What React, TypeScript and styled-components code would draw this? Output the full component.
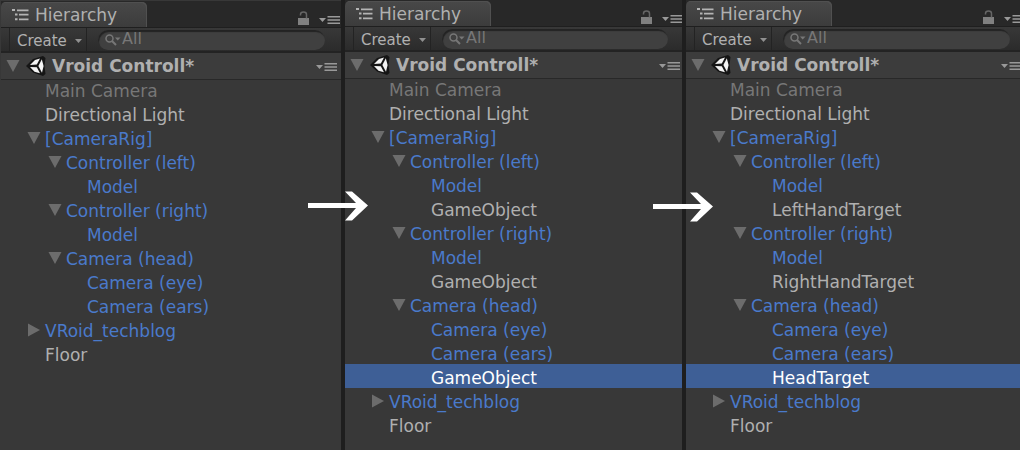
import React from "react";
import styled, { createGlobalStyle } from "styled-components";

type Tone = "normal" | "muted" | "prefab";
type Item = { name: string; depth: number; tone: Tone; fold?: "open" | "closed"; selected?: boolean };

const node = (name: string, depth: number, tone: Tone = "normal", fold?: "open" | "closed"): Item => ({
  name,
  depth,
  tone,
  fold,
});

const buildTree = (left?: string, right?: string, head?: string): Item[] => [
  node("Main Camera", 0, "muted"),
  node("Directional Light", 0),
  node("[CameraRig]", 0, "prefab", "open"),
  node("Controller (left)", 1, "prefab", "open"),
  node("Model", 2, "prefab"),
  ...(left ? [node(left, 2)] : []),
  node("Controller (right)", 1, "prefab", "open"),
  node("Model", 2, "prefab"),
  ...(right ? [node(right, 2)] : []),
  node("Camera (head)", 1, "prefab", "open"),
  node("Camera (eye)", 2, "prefab"),
  node("Camera (ears)", 2, "prefab"),
  ...(head ? [{ ...node(head, 2), selected: true }] : []),
  node("VRoid_techblog", 0, "prefab", "closed"),
  node("Floor", 0),
];

const toneColor: Record<Tone, string> = { normal: "#b0b0b0", muted: "#777777", prefab: "#4a7acb" };

const GlobalStyle = createGlobalStyle`
  * { box-sizing: border-box; }
  body { margin: 0; background: #383838; }
  button, input { font: inherit; color: inherit; border: 0; margin: 0; padding: 0; background: none; }
  svg { display: block; flex: none; }
`;

const Steps = styled.main`
  display: grid;
  grid-template-columns: 345fr 341fr 334fr;
  min-height: 100vh;
  font-family: "DejaVu Sans", sans-serif;
  font-size: 17px;
  line-height: 24px;
  color: #b0b0b0;
`;

const Step = styled.section`
  position: relative;
  min-width: 0;
`;

const Panel = styled.div<{ $first: boolean; $last: boolean }>`
  height: 100%;
  overflow: hidden;
  background: #383838;
  border-right: ${(p) => (p.$last ? 0 : 4)}px solid #1e1e1e;
  padding: ${(p) => (p.$first ? "1px 0 0 1px" : "0")};
`;

const TabBar = styled.header`
  display: flex;
  align-items: flex-end;
  height: 26px;
  background: #282828;
`;

const Tab = styled.button`
  display: flex;
  align-items: center;
  gap: 6px;
  width: 146px;
  height: 25px;
  padding-left: 11px;
  border-radius: 5px 5px 0 0;
  background: linear-gradient(#484848, #3c3c3c);
  box-shadow: inset -1px 1px 0 #505050;
`;

const TabTools = styled.div<{ $overhang: number }>`
  display: flex;
  align-items: flex-end;
  gap: 10px;
  margin: 0 ${(p) => -p.$overhang}px 0 auto;
  padding-bottom: 2px;
  flex: none;
`;

const IconButton = styled.button`
  flex: none;
  color: #909090;
`;

const Toolbar = styled.div<{ $overhang: number }>`
  display: flex;
  align-items: center;
  height: 26px;
  padding: 0 ${(p) => 15 - p.$overhang}px 0 8px;
  border-top: 1px solid #1f1f1f;
  border-bottom: 2px solid #232323;
  background: linear-gradient(#383838, #2b2b2b);
`;

const CreateButton = styled.button`
  display: flex;
  align-items: center;
  justify-content: space-between;
  width: 78px;
  height: 23px;
  padding: 2px 4px 0 7px;
  border: solid #232323;
  border-width: 0 1px;
  font-size: 15px;
  flex: none;
`;

const Search = styled.label`
  display: flex;
  align-items: center;
  flex: 1;
  min-width: 0;
  height: 20px;
  margin-left: 11px;
  padding-left: 7px;
  border-radius: 10px;
  background: #404040;
  box-shadow: inset 1px 2px 1px #232323;
  color: #777777;
  font-size: 16px;
`;

const SearchInput = styled.input`
  flex: 1;
  min-width: 0;
  height: 20px;
  padding-bottom: 2px;
  outline: 0;
  &::placeholder { color: #777777; opacity: 1; }
`;

const SceneBar = styled.div`
  display: flex;
  align-items: center;
  height: 27px;
  padding-left: 5px;
  border-bottom: 1px solid #282828;
  background: #3c3c3c;
`;

const SceneTools = styled.div<{ $overhang: number }>`
  flex: none;
  margin-right: ${(p) => 3 - p.$overhang}px;
`;

const SceneName = styled.h2`
  flex: 1;
  min-width: 0;
  margin: 0 0 0 5px;
  font-size: 17px;
  line-height: 24px;
  white-space: nowrap;
`;

const SceneLogo = styled.span`
  margin-left: 6px;
`;

const Tree = styled.ul`
  list-style: none;
  margin: -3px 0 0;
  padding: 0;
`;

const Row = styled.li<{ $depth: number; $tone: Tone; $selected?: boolean }>`
  display: flex;
  align-items: center;
  height: 24px;
  padding: 4px 0 0 ${(p) => 26 + p.$depth * 21}px;
  color: ${(p) => (p.$selected ? "#ffffff" : toneColor[p.$tone])};
  background: ${(p) => (p.$selected ? "#3e5f96" : "transparent")};
  white-space: nowrap;
`;

const FoldSlot = styled.span`
  flex: none;
  width: 18px;
`;

const StepArrow = styled.svg<{ $top: number; $left: number }>`
  position: absolute;
  z-index: 1;
  top: ${(p) => p.$top}px;
  left: ${(p) => p.$left}px;
`;

const Fold = ({ closed }: { closed?: boolean }) => (
  <svg width="14" height="14" viewBox="0 0 14 14">
    <path d={closed ? "M1 0.5V13.5L13 7Z" : "M0.5 1H13.5L7 13Z"} fill="#6c6c6c" />
  </svg>
);

const ListIcon = () => (
  <svg width="17" height="14" viewBox="0 0 17 14" fill="#b4b4b4">
    <path d="M0 1h3v2H0zM5 1.4h11.500v1.800H5zM3 5.500h2.500v2H3zM7 5.700h9.500v1.800H7zM3 10.200h2.500v2H3zM7 10.400h9.500v1.800H7z" />
  </svg>
);

const LockIcon = () => (
  <svg width="11" height="14" viewBox="0 0 11 14">
    <path d="M0 7h11v7H0z" fill="#808080" />
    <path d="M2.500 4.500V3.500Q2.500 1 5.500 1T8.500 3.500V7.500" fill="none" stroke="#666666" strokeWidth="1.500" />
  </svg>
);

const MenuIcon = () => (
  <svg width="21" height="10" viewBox="0 0 21 10" fill="#999999">
    <path d="M0 3h7L3.500 7zM8.500 1h12.500v1.500H8.500zM8.500 4.200h12.500v1.500H8.500zM8.500 7.400h12.500v1.500H8.500z" />
  </svg>
);

const DropIcon = () => (
  <svg width="7" height="4" viewBox="0 0 7 4">
    <path d="M0 0H7L3.500 4Z" fill="#909090" />
  </svg>
);

const SearchIcon = () => (
  <svg width="17" height="14" viewBox="0 0 17 14">
    <circle cx="4.500" cy="5.500" r="3.500" fill="none" stroke="#777777" strokeWidth="1.500" />
    <path d="M7 8L11 12" stroke="#777777" strokeWidth="2" />
    <path d="M10 4.500H15.500L12.700 7.500Z" fill="#777777" />
  </svg>
);

const UnityIcon = () => (
  <svg width="21" height="22" viewBox="0 0 21 22">
    <path d="M0 11L7 4L17 1L19.500 3L18.500 11L19.500 19L17 21L7 17.500Z" fill="#151515" />
    <g fill="#f4f4f4">
      <path d="M4 10.100L9 5L14 3.500L10.800 9.600Z" />
      <path d="M4 11.900L10.800 12.200L14 18.300L8.500 16.700Z" />
      <path d="M15.800 4.300L17.600 10.900L16 17.700L12.400 11Z" />
    </g>
  </svg>
);

type PanelProps = {
  items: Item[];
  first?: boolean;
  last?: boolean;
  overhang: number;
  arrow?: { top: number; left: number };
};

const HierarchyStep = ({ items, first = false, last = false, overhang, arrow }: PanelProps) => (
  <Step>
    {arrow && (
      <StepArrow $top={arrow.top} $left={arrow.left} width="60" height="30" viewBox="0 0 60 30" aria-hidden="true">
        <path d="M0 12H48L37 0.500H44L60 14.500L44 29.500H37L48 17H0Z" fill="#ffffff" />
      </StepArrow>
    )}
    <Panel $first={first} $last={last}>
      <TabBar>
        <Tab>
          <ListIcon />
          Hierarchy
        </Tab>
        <TabTools $overhang={overhang}>
          <IconButton aria-label="Lock">
            <LockIcon />
          </IconButton>
          <IconButton aria-label="Panel menu">
            <MenuIcon />
          </IconButton>
        </TabTools>
      </TabBar>
      <Toolbar $overhang={overhang}>
        <CreateButton>
          Create
          <DropIcon />
        </CreateButton>
        <Search>
          <SearchIcon />
          <SearchInput placeholder="All" aria-label="Search hierarchy" />
        </Search>
      </Toolbar>
      <SceneBar>
        <IconButton aria-label="Fold scene">
          <Fold />
        </IconButton>
        <SceneLogo>
          <UnityIcon />
        </SceneLogo>
        <SceneName>Vroid Controll*</SceneName>
        <SceneTools $overhang={overhang}>
          <IconButton aria-label="Scene menu">
            <MenuIcon />
          </IconButton>
        </SceneTools>
      </SceneBar>
      <Tree>
        {items.map((item, i) => (
          <Row key={i} $depth={item.depth} $tone={item.tone} $selected={item.selected}>
            <FoldSlot>
              {item.fold && (
                <IconButton aria-label={`Fold ${item.name}`}>
                  <Fold closed={item.fold === "closed"} />
                </IconButton>
              )}
            </FoldSlot>
            {item.name}
          </Row>
        ))}
      </Tree>
    </Panel>
  </Step>
);

export default function App() {
  return (
    <>
      <GlobalStyle />
      <Steps>
        <HierarchyStep items={buildTree()} first overhang={-1} />
        <HierarchyStep
          items={buildTree("GameObject", "GameObject", "GameObject")}
          overhang={1}
          arrow={{ top: 191, left: -37 }}
        />
        <HierarchyStep
          items={buildTree("LeftHandTarget", "RightHandTarget", "HeadTarget")}
          last
          overhang={5}
          arrow={{ top: 192, left: -33 }}
        />
      </Steps>
    </>
  );
}
